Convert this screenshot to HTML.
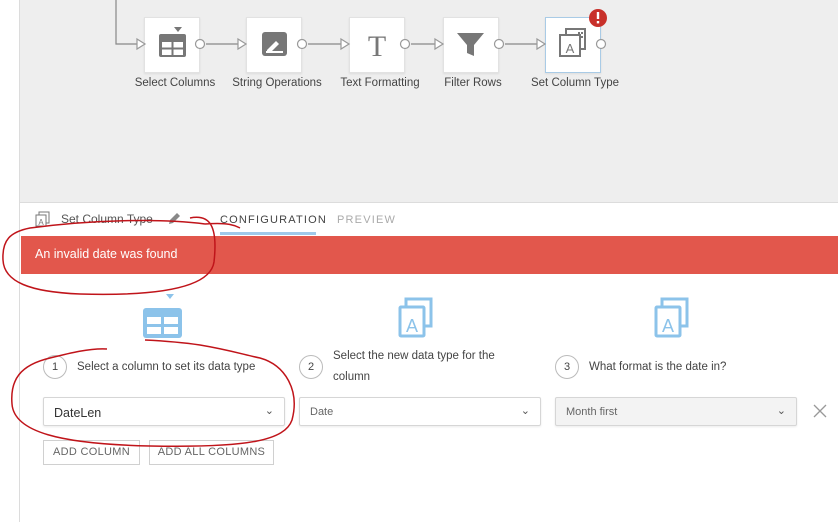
<!DOCTYPE html>
<html><head><meta charset="utf-8"><style>
*{box-sizing:border-box;margin:0;padding:0}
body{width:838px;height:522px;overflow:hidden;background:#fff;font-family:"Liberation Sans","DejaVu Sans",sans-serif;position:relative}
.abs{position:absolute}
.top{left:20px;top:0;width:818px;height:203px;background:#eeeeee;border-bottom:1px solid #dcdcdc}
.lborder{left:19px;top:0;width:1px;height:522px;background:#dcdcdc}
.node{width:56px;height:56px;background:#fff;border:1px solid #e2e2e2;top:17px;box-shadow:0 1px 2px rgba(0,0,0,.08)}
.lbl{top:77px;font-size:11.5px;color:#444;text-align:center;width:110px}
.sel{top:397px;height:29px;border:1px solid #d6d6d6;border-radius:2px;font-size:12px;color:#666;padding:8px 10px;box-shadow:0 1px 2px rgba(0,0,0,.08)}
.sel span{position:absolute;right:10px;top:6px;font-size:11px;color:#555}
.num{top:355px;width:24px;height:24px;border:1px solid #bbb;border-radius:50%;font-size:11px;color:#444;text-align:center;line-height:22px}
.step{font-size:11.5px;color:#444;line-height:21px}
.btn{top:440px;height:25px;border:1px solid #d0d0d0;font-size:11px;color:#666;text-align:center;line-height:23px;letter-spacing:.3px}
</style></head><body>
<div class="abs top"></div>
<div class="abs lborder"></div>
<div class="abs node" style="left:144px"></div>
<div class="abs node" style="left:246px"></div>
<div class="abs node" style="left:349px"></div>
<div class="abs node" style="left:443px"></div>
<div class="abs node" style="left:545px;border:1.5px solid #a9cbe6"></div>
<svg class="abs" style="left:0;top:0" width="838" height="100">
<g fill="none" stroke="#888" stroke-width="1.2">
<path d="M116 0V44H137"/>
<path d="M206 44H238M308 44H341M411 44H435M505 44H537"/>
</g>
<g fill="#fff" stroke="#999" stroke-width="1.2">
<circle cx="200" cy="44" r="4.5"/><circle cx="302" cy="44" r="4.5"/><circle cx="405" cy="44" r="4.5"/><circle cx="499" cy="44" r="4.5"/><circle cx="601" cy="44" r="4.5"/>
<path d="M137 39L145 44L137 49Z"/><path d="M238 39L246 44L238 49Z"/><path d="M341 39L349 44L341 49Z"/><path d="M435 39L443 44L435 49Z"/><path d="M537 39L545 44L537 49Z"/>
</g>
<path d="M174 27l4 5 4-5z" fill="#777"/>
<rect x="159" y="34" width="27" height="23" rx="2" fill="#777"/>
<g fill="#fff"><rect x="162" y="42" width="9.5" height="5.5"/><rect x="173.5" y="42" width="9.5" height="5.5"/><rect x="162" y="49.5" width="9.5" height="5.5"/><rect x="173.5" y="49.5" width="9.5" height="5.5"/></g>
<rect x="262" y="32" width="25" height="24" rx="3" fill="#777"/>
<path d="M267 50l9-9 3 3-9 9h-3z" fill="#fff"/><rect x="266" y="51" width="17" height="2" fill="#fff"/>
<text x="377" y="56" text-anchor="middle" font-family="Liberation Serif,serif" font-size="30" fill="#777">T</text>
<path d="M457 33h27l-10 12v11l-7-3v-8z" fill="#777"/>
<path d="M566 34v-5h19v20h-4" fill="none" stroke="#777" stroke-width="2"/>
<g fill="#777"><rect x="578" y="32" width="2" height="2"/><rect x="581" y="32" width="2" height="2"/><rect x="578" y="36" width="2" height="2"/><rect x="581" y="36" width="2" height="2"/></g>
<rect x="560" y="35" width="20" height="21" fill="#fff" stroke="#777" stroke-width="2"/>
<text x="570" y="53" text-anchor="middle" font-size="13" fill="#777">A</text>
<circle cx="598" cy="18" r="9" fill="#c8302a"/>
<rect x="596.8" y="12" width="2.4" height="7" fill="#fff"/><rect x="596.8" y="21" width="2.4" height="2.4" fill="#fff"/>
</svg>
<div class="abs lbl" style="left:120px">Select Columns</div>
<div class="abs lbl" style="left:222px">String Operations</div>
<div class="abs lbl" style="left:325px">Text Formatting</div>
<div class="abs lbl" style="left:418px">Filter Rows</div>
<div class="abs lbl" style="left:520px">Set Column Type</div>

<svg class="abs" style="left:35px;top:211px" width="16" height="16"><rect x="1" y="4" width="10" height="11" fill="none" stroke="#777"/><path d="M4 4V1h10v11h-3" fill="none" stroke="#777"/><text x="6" y="14" text-anchor="middle" font-size="8" fill="#777">A</text></svg>
<div class="abs" style="left:61px;top:212px;font-size:12px;color:#555">Set Column Type</div>
<svg class="abs" style="left:167px;top:212px" width="14" height="14"><path d="M2 12l1-4 7-7 3 3-7 7z" fill="#888"/></svg>
<div class="abs" style="left:220px;top:214px;font-size:11px;letter-spacing:1.2px;color:#444">CONFIGURATION</div>
<div class="abs" style="left:220px;top:232px;width:96px;height:3px;background:#9fc9ea"></div>
<div class="abs" style="left:337px;top:214px;font-size:11px;letter-spacing:1.2px;color:#aaa">PREVIEW</div>
<div class="abs" style="left:21px;top:236px;width:817px;height:38px;background:#e2574c"></div>
<div class="abs" style="left:35px;top:247px;font-size:12.5px;color:#fff">An invalid date was found</div>

<svg class="abs" style="left:0;top:290px" width="838" height="60">
<path d="M166 4l4 5 4-5z" fill="#8cc3ea"/>
<rect x="143" y="18" width="39" height="30" rx="3" fill="#8cc3ea"/>
<g fill="#fff"><rect x="147" y="27" width="14" height="7"/><rect x="164" y="27" width="14" height="7"/><rect x="147" y="37" width="14" height="7"/><rect x="164" y="37" width="14" height="7"/></g>
<g fill="none" stroke="#8cc3ea" stroke-width="3">
<rect x="400" y="17" width="24" height="29" rx="1"/><path d="M406 17v-8h25v27h-7"/>
<rect x="656" y="17" width="24" height="29" rx="1"/><path d="M662 17v-8h25v27h-7"/>
</g>
<text x="412" y="42" text-anchor="middle" font-size="18" fill="#8cc3ea">A</text>
<text x="668" y="42" text-anchor="middle" font-size="18" fill="#8cc3ea">A</text>
</svg>

<div class="abs num" style="left:43px">1</div>
<div class="abs step" style="left:77px;top:357px">Select a column to set its data type</div>
<div class="abs num" style="left:299px">2</div>
<div class="abs step" style="left:333px;top:346px">Select the new data type for the<br>column</div>
<div class="abs num" style="left:555px">3</div>
<div class="abs step" style="left:589px;top:357px">What format is the date in?</div>

<div class="abs sel" style="left:43px;width:242px;color:#333;font-size:12.5px">DateLen<span>⌄</span></div>
<div class="abs sel" style="left:299px;width:242px;font-size:11px">Date<span>⌄</span></div>
<div class="abs sel" style="left:555px;width:242px;background:#f3f3f3;font-size:11px">Month first<span>⌄</span></div>
<svg class="abs" style="left:813px;top:404px" width="14" height="14"><path d="M1 1l12 12M13 1L1 13" stroke="#999" stroke-width="1.3"/></svg>
<div class="abs btn" style="left:43px;width:97px">ADD COLUMN</div>
<div class="abs btn" style="left:149px;width:125px">ADD ALL COLUMNS</div>

<svg class="abs" style="left:0;top:0" width="838" height="522">
<g fill="none" stroke="#c0141a" stroke-width="1.5">
<path d="M205 224C230 222 236 226 240 228M190 218C210 214 218 226 214 262C210 290 150 296 80 294C30 292 4 282 3 260C2 240 10 232 30 228C90 220 160 218 205 224"/>
<path d="M145 340C165 341 180 342 200 345C230 350 245 355 260 358C285 365 300 390 292 420C285 440 250 448 150 446C60 444 14 432 12 404C10 380 20 365 50 358C70 353 90 348 107 349"/>
</g>
</svg>
</body></html>
